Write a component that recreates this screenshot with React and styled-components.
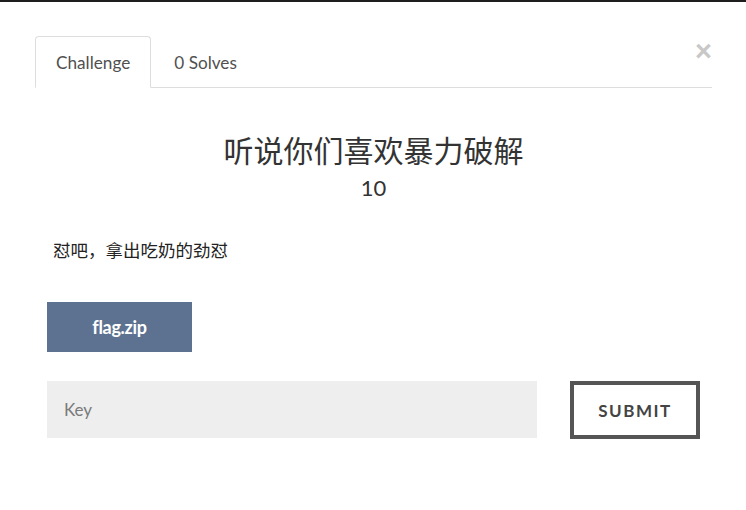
import React from "react";
import styled, { createGlobalStyle } from "styled-components";

const GlobalStyle = createGlobalStyle`
  html, body {
    margin: 0;
    padding: 0;
    background: #fff;
  }
  body {
    font-family: Lato, "Noto Sans CJK SC", sans-serif;
    color: #333;
  }
`;

const Page = styled.div`
  position: relative;
  width: 746px;
  height: 510px;
  box-sizing: border-box;
  border-top: 2px solid #1e1e1e;
  padding: 34px 34px 0 35px;
`;

const Close = styled.span`
  position: absolute;
  top: 34px;
  right: 34px;
  font-size: 29px;
  line-height: 30px;
  color: #c8c8c8;
  font-family: "Liberation Sans", sans-serif;
  font-weight: 700;
`;

const Tabs = styled.div`
  display: flex;
  border-bottom: 1px solid #dddddd;
  height: 52px;
  box-sizing: border-box;
`;

const Tab = styled.div`
  display: flex;
  align-items: center;
  padding: 0 20px;
  height: 52px;
  margin-bottom: -1px;
  box-sizing: border-box;
  font-size: 17.2px;
  color: #505050;
  border: 1px solid ${(p) => (p.active ? "#dddddd" : "transparent")};
  border-bottom-color: ${(p) => (p.active ? "#fff" : "transparent")};
  border-radius: 4px 4px 0 0;
  background: ${(p) => (p.active ? "#fff" : "transparent")};
  margin-right: 2px;
`;

const Title = styled.h3`
  margin: 44px 0 0;
  text-align: center;
  font-size: 30px;
  font-weight: 400;
  line-height: 36px;
  color: #333;
`;

const Value = styled.h4`
  margin: 6px 0 0;
  text-align: center;
  font-size: 22px;
  font-weight: 400;
  line-height: 28px;
  color: #333;
`;

const Desc = styled.p`
  margin: 37px 0 0 18px;
  font-size: 17.5px;
  line-height: 24px;
  color: #222;
`;

const Files = styled.div`
  margin: 39px 0 0 12px;
`;

const FileButton = styled.button`
  width: 145px;
  height: 50px;
  border: none;
  background: #5c7290;
  color: #fff;
  font-family: Lato, sans-serif;
  font-weight: 700;
  font-size: 18px;
  letter-spacing: -0.3px;
`;

const SubmitRow = styled.div`
  display: grid;
  grid-template-columns: 490px 130px;
  column-gap: 33px;
  margin: 29px 12px 0 12px;
`;

const KeyInput = styled.input`
  height: 57px;
  box-sizing: border-box;
  border: none;
  background: #eeeeee;
  padding: 0 17px;
  font-family: Lato, sans-serif;
  font-size: 17px;
  color: #555;
  outline: none;
  &::placeholder {
    color: #7a7a7a;
  }
`;

const SubmitButton = styled.button`
  height: 58px;
  box-sizing: border-box;
  border: 4px solid #555555;
  background: #fff;
  font-family: Lato, sans-serif;
  font-weight: 700;
  font-size: 17px;
  letter-spacing: 1.5px;
  color: #444;
`;

export default function App() {
  return (
    <Page>
      <GlobalStyle />
      <Close>×</Close>
      <Tabs>
        <Tab active>Challenge</Tab>
        <Tab>0 Solves</Tab>
      </Tabs>
      <Title>听说你们喜欢暴力破解</Title>
      <Value>10</Value>
      <Desc>怼吧，拿出吃奶的劲怼</Desc>
      <Files>
        <FileButton>flag.zip</FileButton>
      </Files>
      <SubmitRow>
        <KeyInput placeholder="Key" />
        <SubmitButton>SUBMIT</SubmitButton>
      </SubmitRow>
    </Page>
  );
}
